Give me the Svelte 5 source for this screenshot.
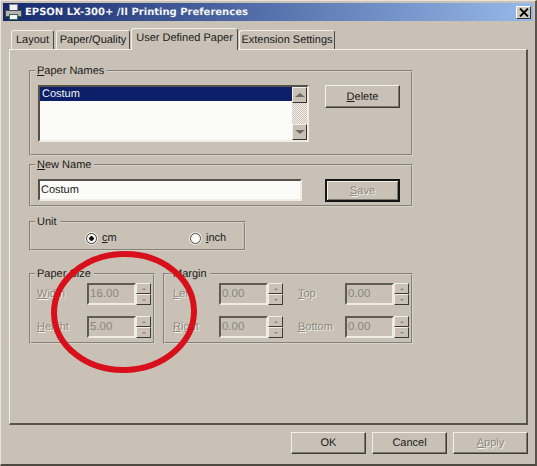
<script>
	const tabs = [
		{ label: "Layout", width: 43 },
		{ label: "Paper/Quality", width: 74 },
		{ label: "User Defined Paper", width: 107, active: true },
		{ label: "Extension Settings", width: 96 }
	];

	const paperSize = [
		{ key: "W", rest: "idth", value: "16.00" },
		{ key: "H", rest: "eight", value: "5.00" }
	];

	const marginLeft = [
		{ key: "L", rest: "eft", value: "0.00" },
		{ key: "R", rest: "ight", value: "0.00" }
	];

	const marginRight = [
		{ key: "T", rest: "op", value: "0.00" },
		{ key: "B", rest: "ottom", value: "0.00" }
	];
</script>

{#snippet spinRow(row, labelClass)}
	<div class="spin-row">
		<span class="dim {labelClass}"><u>{row.key}</u>{row.rest}</span>
		<div class="spin-value">{row.value}</div>
		<div class="spin-btns">
			<div class="spin-btn"><i class="arrow up"></i></div>
			<div class="spin-btn"><i class="arrow down"></i></div>
		</div>
	</div>
{/snippet}

<div class="window">
	<div class="titlebar">
		<svg class="printer" width="17" height="16" viewBox="0 0 17 16">
			<rect x="4.5" y="0.5" width="8" height="6" fill="#f0f0f0" stroke="#8a8a8a" />
			<rect x="0.5" y="6.5" width="16" height="6" fill="#b4b4b4" stroke="#4a4a4a" />
			<rect x="4.5" y="10.5" width="8" height="5" fill="#f4f4f4" stroke="#3c6a50" />
		</svg>
		<span class="title">EPSON LX-300+ /II Printing Preferences</span>
		<div class="close">
			<svg width="10" height="9" viewBox="0 0 10 9">
				<path d="M1 0.5 L9 8.5 M9 0.5 L1 8.5" stroke="#000" stroke-width="1.8" />
			</svg>
		</div>
	</div>

	<div class="tabs">
		{#each tabs as tab}
			<div class="tab" class:active={tab.active} style="width: {tab.width}px">{tab.label}</div>
		{/each}
	</div>

	<div class="panel">
		<fieldset class="names">
			<legend><u>P</u>aper Names</legend>
			<div class="names-row">
				<div class="listbox">
					<div class="list-items">
						<div class="list-selected">Costum</div>
					</div>
					<div class="scrollbar">
						<div class="scroll-btn"><i class="arrow big up"></i></div>
						<div class="scroll-track"></div>
						<div class="scroll-btn"><i class="arrow big down"></i></div>
					</div>
				</div>
				<div class="button side"><span><u>D</u>elete</span></div>
			</div>
		</fieldset>

		<fieldset class="newname">
			<legend><u>N</u>ew Name</legend>
			<div class="names-row">
				<div class="textbox">Costum</div>
				<div class="button side default"><span class="dim"><u>S</u>ave</span></div>
			</div>
		</fieldset>

		<fieldset class="unit">
			<legend>Unit</legend>
			<div class="unit-row">
				<span class="radio-item cm"><i class="radio checked"></i><span><u>c</u>m</span></span>
				<span class="radio-item"><i class="radio"></i><span><u>i</u>nch</span></span>
			</div>
		</fieldset>

		<div class="sizes">
			<fieldset class="papersize">
				<legend>Paper Size</legend>
				{#each paperSize as row}
					{@render spinRow(row, "lbl-paper")}
				{/each}
			</fieldset>
			<fieldset class="margin">
				<legend>Margin</legend>
				<div class="margin-cols">
					<div class="margin-col">
						{#each marginLeft as row}
							{@render spinRow(row, "lbl-left")}
						{/each}
					</div>
					<div class="margin-col">
						{#each marginRight as row}
							{@render spinRow(row, "lbl-right")}
						{/each}
					</div>
				</div>
			</fieldset>
		</div>
	</div>

	<div class="footer">
		<div class="button"><span>OK</span></div>
		<div class="button"><span>Cancel</span></div>
		<div class="button"><span class="dim"><u>A</u>pply</span></div>
	</div>

	<svg class="circle" width="537" height="466" viewBox="0 0 537 466">
		<ellipse cx="124" cy="312" rx="70" ry="58" transform="rotate(-2 124 312)" fill="none" stroke="#d8101c" stroke-width="6" />
	</svg>
</div>

<style>
	:global(body) {
		margin: 0;
		background: #c9c1b5;
	}
	.window {
		position: relative;
		width: 537px;
		height: 466px;
		box-sizing: border-box;
		padding: 2px 3px 0;
		background: #c9c1b5;
		border-top: 1px solid #e8e4dc;
		border-left: 1px solid #e8e4dc;
		border-right: 2px solid #5a554c;
		border-bottom: 2px solid #4e4a42;
		font-family: "Liberation Sans", Arial, sans-serif;
		font-size: 11px;
		text-rendering: geometricPrecision;
		color: #1a1a1a;
		overflow: hidden;
	}
	.titlebar {
		display: flex;
		align-items: center;
		height: 18px;
		margin: 0 -1px;
		padding: 0 2px;
		background: linear-gradient(to right, #14296c, #97b9ea);
		color: #f4f4f4;
	}
	.printer {
		flex: none;
		margin-right: 3px;
	}
	.title {
		font-family: "DejaVu Sans", Verdana, sans-serif;
		font-weight: bold;
		font-size: 10px;
		white-space: nowrap;
		flex: 1;
	}
	.close {
		width: 15px;
		height: 13px;
		background: #d0c9bd;
		border: 1px solid;
		border-color: #fff #333 #333 #fff;
		display: flex;
		align-items: center;
		justify-content: center;
		box-sizing: border-box;
	}
	.tabs {
		display: flex;
		align-items: flex-end;
		height: 28px;
		padding-left: 7px;
		gap: 2px;
	}
	.tab {
		box-sizing: border-box;
		height: 19px;
		background: #c9c1b5;
		border-top: 1px solid #f2efe9;
		border-left: 1px solid #f2efe9;
		border-right: 1px solid #4a463e;
		border-radius: 3px 3px 0 0;
		text-align: center;
		line-height: 19px;
		white-space: nowrap;
	}
	.tab.active {
		height: 22px;
		line-height: 18px;
		margin: 0 -1px -1px -1px;
		z-index: 1;
		position: relative;
	}
	.panel {
		box-sizing: border-box;
		width: 519px;
		height: 376px;
		margin-left: 5px;
		padding: 14px 19px 0;
		border-top: 1px solid #f2efe9;
		border-left: 1px solid #f2efe9;
		border-right: 2px solid #5a554c;
		border-bottom: 2px solid #5a554c;
	}
	fieldset {
		margin: 0;
		padding: 0 7px;
		border: 2px groove #d8d2c8;
		box-sizing: border-box;
		min-width: 0;
	}
	legend {
		padding: 0 3px 0 2px;
		margin-left: -3px;
		line-height: 14px;
		height: 14px;
	}
	.names {
		width: 384px;
		height: 92px;
	}
	.newname {
		width: 384px;
		height: 49px;
		margin-top: 2px;
	}
	.unit {
		width: 217px;
		height: 36px;
		margin-top: 8px;
	}
	.names-row {
		display: flex;
		align-items: flex-start;
		padding-top: 7px;
	}
	.listbox {
		box-sizing: border-box;
		width: 271px;
		height: 57px;
		display: flex;
		background: #fbfbf9;
		border: 2px solid;
		border-color: #55514a #efece6 #efece6 #55514a;
	}
	.list-items {
		flex: 1;
	}
	.list-selected {
		height: 14px;
		line-height: 14px;
		padding-left: 2px;
		background: #0c1f68;
		color: #f4f4f4;
	}
	.scrollbar {
		width: 15px;
		display: flex;
		flex-direction: column;
	}
	.scroll-btn {
		box-sizing: border-box;
		height: 16px;
		background: #c9c1b5;
		border: 1px solid;
		border-color: #f2efe9 #3a362f #3a362f #f2efe9;
		display: flex;
		align-items: center;
		justify-content: center;
	}
	.scroll-track {
		flex: 1;
		background: repeating-conic-gradient(#c9c1b5 0 25%, #f4f2ee 0 50%) 0 0 / 2px 2px;
	}
	.textbox {
		box-sizing: border-box;
		width: 264px;
		height: 22px;
		padding-left: 1px;
		line-height: 18px;
		background: #fbfbf9;
		border: 2px solid;
		border-color: #55514a #efece6 #efece6 #55514a;
		margin-right: 23px;
	}
	.button {
		box-sizing: border-box;
		width: 75px;
		height: 23px;
		display: flex;
		align-items: center;
		justify-content: center;
		border: 1px solid;
		border-color: #f2efe9 #3f3b34 #3f3b34 #f2efe9;
		box-shadow: inset -1px -1px 0 #7d786d;
	}
	.side {
		margin-left: 16px;
	}
	.names-row .default {
		margin-left: 0;
		border: 2px solid #151515;
		box-shadow: inset 1px 1px 0 #f2efe9, inset -1px -1px 0 #7d786d;
	}
	.dim {
		color: #8c877c;
		text-shadow: 1px 1px 0 #f4f2ee;
	}
	.unit-row {
		display: flex;
		padding: 2px 0 0 48px;
		height: 14px;
		align-items: center;
	}
	.radio-item {
		display: flex;
		align-items: center;
		gap: 5px;
	}
	.cm {
		width: 104px;
	}
	.radio {
		box-sizing: border-box;
		width: 11px;
		height: 11px;
		border-radius: 50%;
		background: #fbfbf9;
		border: 1px solid #4a463e;
		box-shadow: 0 0 0 1px #efece6;
		display: block;
	}
	.radio.checked {
		background: radial-gradient(circle, #111 0 2px, #fbfbf9 2.5px);
	}
	.sizes {
		display: flex;
		gap: 8px;
		margin-top: 16px;
	}
	.papersize {
		width: 126px;
		height: 77px;
		padding: 2px 2px 0 0;
	}
	.papersize legend {
		margin-left: 4px;
	}
	.margin {
		width: 250px;
		height: 77px;
		padding: 2px 0 0;
	}
	.margin legend {
		margin-left: 6px;
	}
	.margin-cols {
		display: flex;
	}
	.margin-col {
		flex: none;
	}
	.margin-col:last-child {
		margin-left: 9px;
	}
	.spin-row {
		display: flex;
		align-items: center;
		height: 22px;
		margin-bottom: 11px;
		padding-left: 6px;
	}
	.spin-row:last-child {
		margin-bottom: 0;
	}
	.lbl-paper {
		width: 50px;
	}
	.lbl-left {
		width: 46px;
		margin-left: 2px;
	}
	.lbl-right {
		width: 47px;
	}
	.spin-value {
		box-sizing: border-box;
		width: 49px;
		height: 22px;
		padding-left: 1px;
		line-height: 18px;
		font-size: 11.5px;
		color: #8c877c;
		border: 2px solid;
		border-color: #5f5b52 #efece6 #efece6 #5f5b52;
	}
	.spin-btns {
		display: flex;
		flex-direction: column;
		width: 15px;
		height: 22px;
	}
	.spin-btn {
		box-sizing: border-box;
		flex: 1;
		border: 1px solid;
		border-color: #f2efe9 #3f3b34 #3f3b34 #f2efe9;
		display: flex;
		align-items: center;
		justify-content: center;
	}
	.arrow {
		display: block;
		width: 0;
		height: 0;
		border-left: 2px solid transparent;
		border-right: 2px solid transparent;
	}
	.arrow.up {
		border-bottom: 2px solid #8c877c;
	}
	.arrow.down {
		border-top: 2px solid #8c877c;
	}
	.arrow.big {
		border-left-width: 5px;
		border-right-width: 5px;
	}
	.arrow.big.up {
		border-bottom: 4px solid #6f6b62;
	}
	.arrow.big.down {
		border-top: 4px solid #6f6b62;
	}
	.footer {
		display: flex;
		justify-content: flex-end;
		gap: 6px;
		margin-top: 7px;
		padding-right: 4px;
	}
	.footer .button {
		height: 22px;
	}
	.circle {
		position: absolute;
		left: -1px;
		top: -1px;
		pointer-events: none;
	}
</style>
